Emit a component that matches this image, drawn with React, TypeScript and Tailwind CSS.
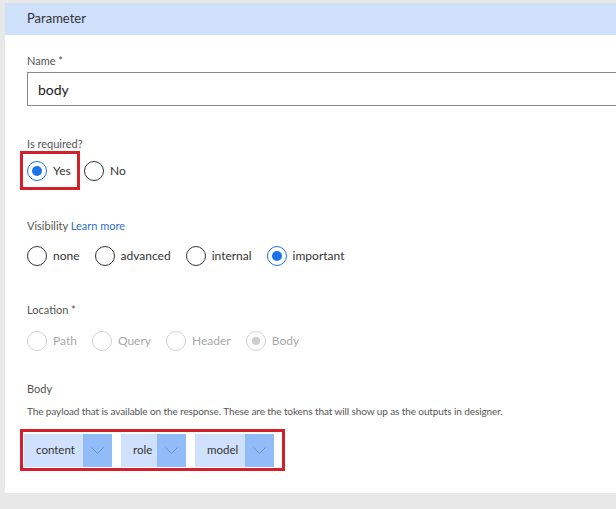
import React from "react";

const font = { fontFamily: 'Lato, "Open Sans", sans-serif' };

function Radio({ label, checked, disabled }: { label: string; checked?: boolean; disabled?: boolean }) {
  return (
    <div className="flex items-center gap-[6px]">
      <span
        className={
          "flex h-[20px] w-[20px] items-center justify-center rounded-full border " +
          (disabled
            ? "border-[#d2d2d2]"
            : checked
            ? "border-[#1a73e8]"
            : "border-[#333]")
        }
      >
        {checked && (
          <span className={"rounded-full " + (disabled ? "h-[8px] w-[8px] bg-[#cdcdcd]" : "h-[10px] w-[10px] bg-[#1a73e8]")} />
        )}
      </span>
      <span className={"leading-[20px] " + (disabled ? "text-[12px] text-[#a8a8a8]" : "text-[12px] text-[#333]")}>{label}</span>
    </div>
  );
}

function Chip({ label, w }: { label: string; w: string }) {
  return (
    <div className={"flex h-[33px] items-stretch bg-[#cfe1fc] " + w}>
      <span className="flex flex-1 items-center pl-[12px] text-[11.5px] text-[#333]">{label}</span>
      <span className="flex w-[29px] items-center justify-center bg-[#92bcf7]">
        <svg width="13" height="7" viewBox="0 0 13 7" fill="none">
          <path d="M0.5 0.5l6 6 6-6" stroke="#6b8fc4" strokeWidth="1" />
        </svg>
      </span>
    </div>
  );
}

export default function App() {
  return (
    <div className="h-[509px] w-[616px] overflow-hidden bg-[#e8e8e8] pl-[5px] pt-[3px]" style={font}>
      <div className="h-[490px] w-[640px] bg-white">
        <div className="flex h-[32px] items-center bg-[#cfe0fb] pl-[22px] text-[13px] text-[#333]">Parameter</div>
        <div className="pl-[22px]">
          <div className="pt-[18px] text-[11px] leading-[16px] text-[#555]">Name *</div>
          <div className="mt-[3px] flex h-[34px] items-center border border-[#8a8a8a] pl-[10px] text-[14px] text-[#222]">
            body
          </div>

          <div className="mt-[30px] text-[11px] leading-[16px] text-[#555]">Is required?</div>
          <div className="-mt-[1px] flex items-center">
            <div className="-ml-[7px] flex h-[39px] w-[60px] items-center border-[3px] border-[#d3202a] pl-[4px]">
              <Radio label="Yes" checked />
            </div>
            <div className="ml-[4px]">
              <Radio label="No" />
            </div>
          </div>

          <div className="mt-[28px] text-[11px] leading-[16px] text-[#555]">
            Visibility <span className="text-[#2f6fd0]">Learn more</span>
          </div>
          <div className="mt-[12px] flex items-center gap-[15px]">
            <Radio label="none" />
            <Radio label="advanced" />
            <Radio label="internal" />
            <Radio label="important" checked />
          </div>

          <div className="mt-[36px] text-[11px] leading-[16px] text-[#555]">Location *</div>
          <div className="mt-[13px] flex items-center gap-[15px]">
            <Radio label="Path" disabled />
            <Radio label="Query" disabled />
            <Radio label="Header" disabled />
            <Radio label="Body" disabled checked />
          </div>

          <div className="mt-[30px] text-[11px] leading-[16px] text-[#555]">Body</div>
          <div className="mt-[6px] text-[10px] leading-[16px] tracking-[-0.1px] text-[#555]">
            The payload that is available on the response. These are the tokens that will show up as the outputs in designer.
          </div>
          <div className="-ml-[7px] mt-[10px] flex h-[42px] w-[265px] items-center gap-[9px] border-[3px] border-[#d3202a] pl-[1px]">
            <Chip label="content" w="w-[88px]" />
            <Chip label="role" w="w-[65px]" />
            <Chip label="model" w="w-[79px]" />
          </div>
        </div>
      </div>
    </div>
  );
}
